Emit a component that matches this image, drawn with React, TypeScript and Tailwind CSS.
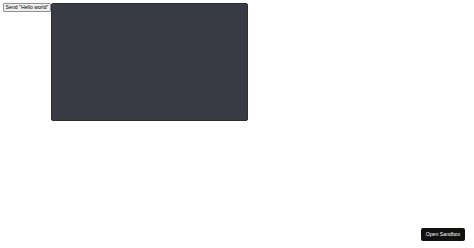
export default function App() {
  return (
    <div className="min-h-screen bg-white font-['Liberation_Sans',sans-serif]">
      <div className="flex items-start p-[3px]">
        <button className="w-[48px] h-[9px] border border-[#8f8f8f] bg-[#efefef] text-[5.2px] leading-[7px] text-black rounded-[1px] whitespace-nowrap">
          Send "Hello world"
        </button>
        <div className="w-[197px] h-[118px] rounded-[2px] bg-[#383b43] border border-[#2c2e34]" />
      </div>
      <button className="fixed right-[9px] bottom-[7px] w-[44px] h-[13px] rounded-[2px] bg-[#111111] text-white text-[5.2px] leading-[13px] whitespace-nowrap">
        Open Sandbox
      </button>
    </div>
  );
}
